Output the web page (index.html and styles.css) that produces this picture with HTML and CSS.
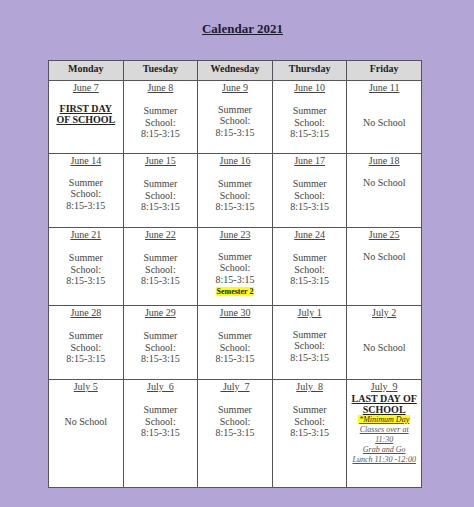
FILE: index.html
```html
<!DOCTYPE html>
<html lang="en">
<head>
<meta charset="utf-8">
<title>Calendar 2021</title>
<link rel="stylesheet" href="styles.css">
</head>
<body>
<main class="page">
  <h1 class="title">Calendar 2021</h1>
  <div class="calendar">
    <div class="head">Monday</div>
    <div class="head">Tuesday</div>
    <div class="head">Wednesday</div>
    <div class="head">Thursday</div>
    <div class="head">Friday</div>

    <div class="cell"><div class="date">June 7</div><div class="big skip1">FIRST DAY<br>OF SCHOOL</div></div>
    <div class="cell"><div class="date">June 8</div><div class="skip1">Summer<br>School:<br>8:15-3:15</div></div>
    <div class="cell"><div class="date">June 9</div><div class="skip1 up">Summer<br>School:<br>8:15-3:15</div></div>
    <div class="cell"><div class="date">June 10</div><div class="skip1">Summer<br>School:<br>8:15-3:15</div></div>
    <div class="cell"><div class="date">June 11</div><div class="skip2">No School</div></div>

    <div class="cell"><div class="date">June 14</div><div class="skip1 up">Summer<br>School:<br>8:15-3:15</div></div>
    <div class="cell"><div class="date">June 15</div><div class="skip1">Summer<br>School:<br>8:15-3:15</div></div>
    <div class="cell"><div class="date">June 16</div><div class="skip1">Summer<br>School:<br>8:15-3:15</div></div>
    <div class="cell"><div class="date">June 17</div><div class="skip1">Summer<br>School:<br>8:15-3:15</div></div>
    <div class="cell"><div class="date">June 18</div><div class="skip1 up">No School</div></div>

    <div class="cell"><div class="date">June 21</div><div class="skip1">Summer<br>School:<br>8:15-3:15</div></div>
    <div class="cell"><div class="date">June 22</div><div class="skip1">Summer<br>School:<br>8:15-3:15</div></div>
    <div class="cell"><div class="date">June 23</div><div class="skip1 up">Summer<br>School:<br>8:15-3:15</div><div class="sem"><mark class="hl">Semester 2</mark></div></div>
    <div class="cell"><div class="date">June 24</div><div class="skip1">Summer<br>School:<br>8:15-3:15</div></div>
    <div class="cell"><div class="date">June 25</div><div class="skip1 up">No School</div></div>

    <div class="cell"><div class="date">June 28</div><div class="skip1">Summer<br>School:<br>8:15-3:15</div></div>
    <div class="cell"><div class="date">June 29</div><div class="skip1">Summer<br>School:<br>8:15-3:15</div></div>
    <div class="cell"><div class="date">June 30</div><div class="skip1">Summer<br>School:<br>8:15-3:15</div></div>
    <div class="cell"><div class="date">July 1</div><div class="skip1 up">Summer<br>School:<br>8:15-3:15</div></div>
    <div class="cell"><div class="date">July 2</div><div class="skip2">No School</div></div>

    <div class="cell"><div class="date">July 5</div><div class="skip2">No School</div></div>
    <div class="cell"><div class="date">July&nbsp; 6</div><div class="skip1">Summer<br>School:<br>8:15-3:15</div></div>
    <div class="cell"><div class="date">&nbsp;July&nbsp; 7</div><div class="skip1">Summer<br>School:<br>8:15-3:15</div></div>
    <div class="cell"><div class="date">July&nbsp; 8</div><div class="skip1">Summer<br>School:<br>8:15-3:15</div></div>
    <div class="cell"><div class="date">July&nbsp; 9</div><div class="big">LAST DAY OF<br>SCHOOL</div><div class="small"><mark class="hl">*Minimum Day</mark><br>Classes over at<br>11:30<br>Grab and Go<br>Lunch 11:30 -12:00</div></div>
  </div>
</main>
</body>
</html>
```
FILE: styles.css
```css
html, body {
  margin: 0;
  padding: 0;
  background: #b3a6d7;
}

body {
  width: 474px;
  height: 507px;
  overflow: hidden;
  font-family: "Liberation Serif", "Times New Roman", serif;
}

.page {
  padding: 21px 0 0 48px;
  width: 374px;
}

.title {
  margin: 0 0 23px 0;
  padding-left: 15px;
  font-size: 13px;
  line-height: 16px;
  font-weight: bold;
  text-align: center;
  text-decoration: underline;
  color: #1d1b30;
}

.calendar {
  display: grid;
  grid-template-columns: repeat(5, 1fr);
  grid-template-rows: 19px 72px 73px 77px 73px 107px;
  gap: 1px;
  padding: 1px;
  width: 372px;
  background: #55535e;
}

.head {
  background: #d9d9d9;
  color: #1e1e1e;
  font-weight: bold;
  font-size: 10px;
  line-height: 13px;
  padding-top: 1px;
  text-align: center;
}

.cell {
  background: #ffffff;
  color: #444444;
  font-size: 10px;
  line-height: 11.5px;
  padding-top: 1px;
  text-align: center;
}

.date {
  text-decoration: underline;
}

.skip1 {
  margin-top: 11.5px;
}

.skip2 {
  margin-top: 23px;
}

.up {
  position: relative;
  top: -1.5px;
}

.big {
  font-weight: bold;
  color: #222222;
  text-decoration: underline;
}

.skip1.big {
  margin-top: 9.5px;
  line-height: 11px;
}

.sem {
  font-size: 8px;
  line-height: 10px;
  font-weight: bold;
  color: #111111;
  margin-top: 0;
}

.hl {
  background: #ffff00;
  color: #222222;
  padding: 0 1px;
}

.small {
  font-size: 8px;
  line-height: 10px;
  font-style: italic;
  text-decoration: underline;
  color: #555555;
  margin-top: -1px;
}
```
